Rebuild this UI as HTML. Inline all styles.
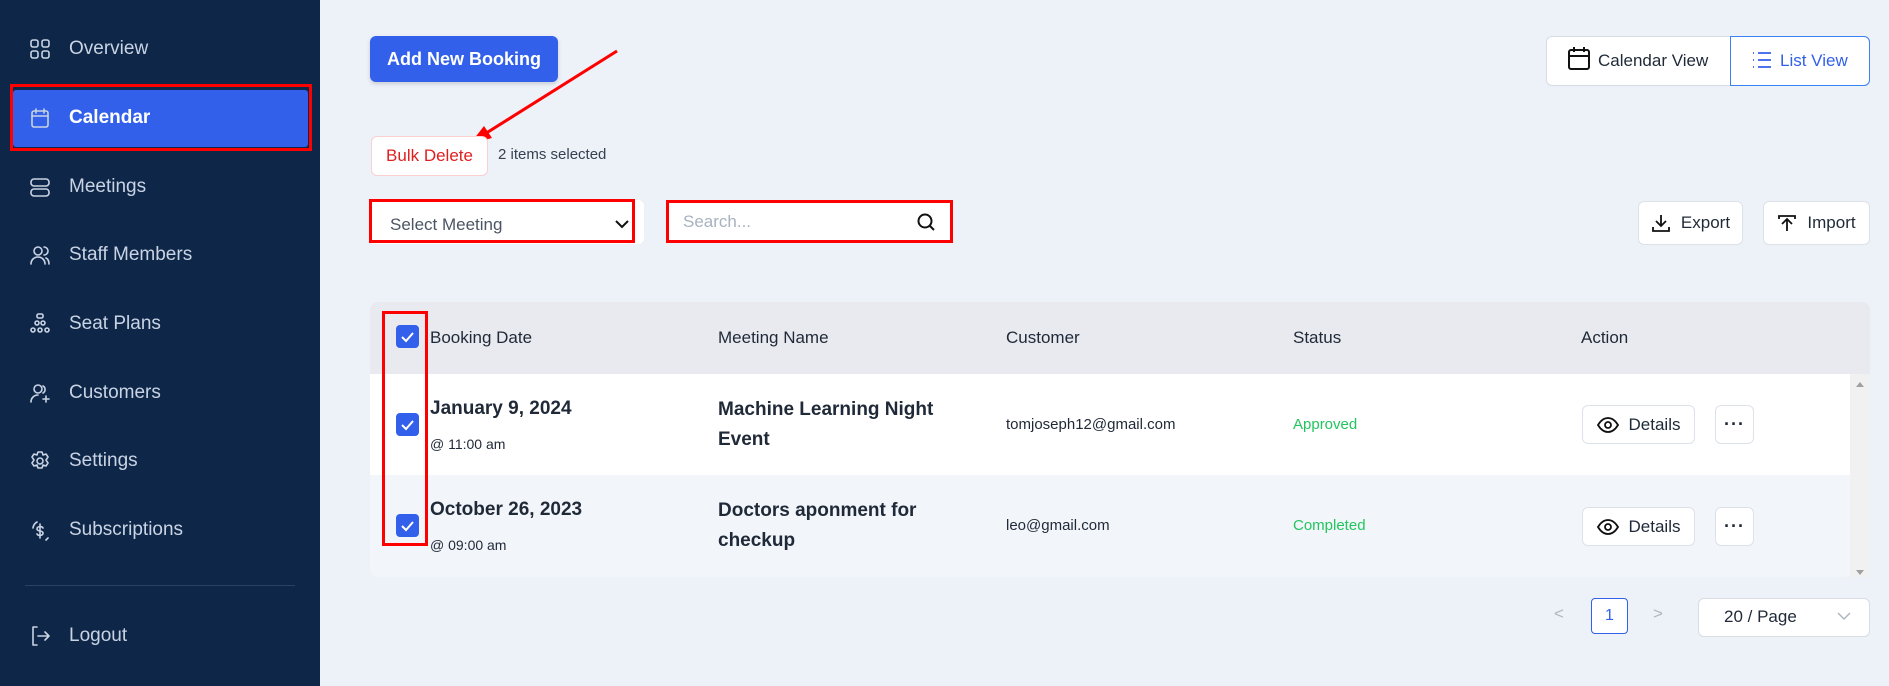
<!DOCTYPE html>
<html><head><meta charset="utf-8"><style>
*{box-sizing:border-box;margin:0;padding:0}
body{width:1889px;height:686px;overflow:hidden;background:#edf1f8;font-family:"Liberation Sans",sans-serif;position:relative}
.abs{position:absolute}
#sb{left:0;top:0;width:320px;height:686px;background:#0e2749}
.nav{position:absolute;left:29px;height:30px;display:flex;align-items:center;color:#c9d3e3;font-size:19px}
.nav svg{width:22px;height:22px;margin-right:18px;stroke:#c9d3e3;fill:none;stroke-width:1.6;stroke-linecap:round;stroke-linejoin:round}
.btn{position:absolute;background:#fff;border:1px solid #dde2ea;border-radius:6px;display:flex;align-items:center;justify-content:center;font-size:18px;color:#1f2937}
.red{position:absolute;border:3px solid #f00}
.th{position:absolute;top:328px;font-size:17px;color:#1f2937}
.date{position:absolute;left:430px;font-size:19px;font-weight:bold;color:#1f2937}
.time{position:absolute;left:430px;font-size:14px;color:#1f2937}
.mn{position:absolute;left:718px;font-size:19px;font-weight:bold;color:#1f2937;line-height:30px}
.em{position:absolute;left:1006px;font-size:15px;color:#1f2937}
.st{position:absolute;left:1293px;font-size:15px;color:#22c55e}
.cb{position:absolute;left:396px;width:23px;height:23px;background:#3360ea;border-radius:4px}
.cb svg{width:23px;height:23px}
</style></head><body>
<div id="sb" class="abs"></div>
<div class="abs" style="left:10px;top:84px;width:302px;height:67px;border:3px solid #f00;background:#0e2749"></div>
<div class="abs" style="left:13px;top:90px;width:295px;height:57px;background:#3360ea;border-radius:3px"></div>
<div class="nav" style="top:34px"><svg viewBox="0 0 22 22"><rect x="2" y="2" width="7" height="7" rx="2"/><rect x="13" y="2" width="7" height="7" rx="2"/><rect x="2" y="13" width="7" height="7" rx="2"/><rect x="13" y="13" width="7" height="7" rx="2"/></svg>Overview</div>
<div class="nav" style="top:103px;color:#fff;font-weight:bold"><svg viewBox="0 0 22 22"><rect x="3" y="4" width="16" height="16" rx="2"/><path d="M3 9h16M7 2v4M15 2v4"/></svg>Calendar</div>
<div class="nav" style="top:172px"><svg viewBox="0 0 22 22"><rect x="2" y="3" width="18" height="7" rx="3"/><rect x="2" y="13" width="18" height="7" rx="3"/></svg>Meetings</div>
<div class="nav" style="top:240px"><svg viewBox="0 0 22 22"><circle cx="9" cy="7" r="4"/><path d="M2 20c0-4 3-7 7-7s7 3 7 7M15 3a4 4 0 0 1 0 8M17 14c2 1 3 3 3 6"/></svg>Staff Members</div>
<div class="nav" style="top:309px"><svg viewBox="0 0 22 22"><rect x="8" y="1" width="6" height="4" rx="1.5"/><circle cx="8" cy="10" r="2"/><circle cx="14" cy="10" r="2"/><circle cx="4" cy="17" r="2"/><circle cx="11" cy="17" r="2"/><circle cx="18" cy="17" r="2"/></svg>Seat Plans</div>
<div class="nav" style="top:378px"><svg viewBox="0 0 22 22"><circle cx="9" cy="7" r="4"/><path d="M2 20c0-4 3-7 7-7M14 4a4 4 0 0 1 0 7M17 14v6M14 17h6"/></svg>Customers</div>
<div class="nav" style="top:446px"><svg viewBox="0 0 22 22"><circle cx="11" cy="11" r="3"/><path d="M9 2h4l1 3 3-1 2 3-2 3 2 3-2 3-3-1-1 3H9l-1-3-3 1-2-3 2-3-2-3 2-3 3 1z"/></svg>Settings</div>
<div class="nav" style="top:515px"><svg viewBox="0 0 22 22"><path d="M4 9a8 8 0 0 1 4-6M14 9c-1-2-6-2-6 1s6 1 6 4-5 3-6 1M11 5v14M19 19l-2 2"/></svg>Subscriptions</div>
<div class="abs" style="left:25px;top:585px;width:270px;height:1px;background:#2a4066"></div>
<div class="nav" style="top:621px"><svg viewBox="0 0 22 22"><path d="M8 2H4v18h4M9 11h11M16 7l4 4-4 4"/></svg>Logout</div>

<div class="abs" style="left:370px;top:36px;width:188px;height:46px;background:#3360ea;border-radius:6px;color:#fff;font-weight:bold;font-size:18px;display:flex;align-items:center;justify-content:center;box-shadow:0 2px 4px rgba(0,0,0,.15)">Add New Booking</div>
<svg class="abs" style="left:0;top:0" width="700" height="200"><line x1="617" y1="51" x2="480" y2="137" stroke="#f00" stroke-width="3"/><polygon points="470,144 484,126 492,138" fill="#f00"/></svg>
<div class="btn" style="left:371px;top:136px;width:117px;height:40px;color:#e02020;border-color:#f8d0d0;font-size:17px">Bulk Delete</div>
<div class="abs" style="left:498px;top:146px;font-size:15px;color:#374151">2 items selected</div>
<div class="abs" style="left:369px;top:200px;width:275px;height:44px;background:#fff;border-radius:6px"></div>
<div class="red" style="left:369px;top:199px;width:266px;height:44px"></div>
<div class="abs" style="left:390px;top:215px;font-size:17px;color:#4b5563">Select Meeting</div>
<svg class="abs" style="left:614px;top:218px" width="16" height="12"><path d="M2 3l6 6 6-6" stroke="#111" stroke-width="2" fill="none"/></svg>
<div class="abs" style="left:666px;top:200px;width:287px;height:43px;background:#fff;border:3px solid #f00"></div>
<div class="abs" style="left:683px;top:212px;font-size:17px;color:#a8b2c0">Search...</div>
<svg class="abs" style="left:915px;top:211px" width="22" height="22"><circle cx="10" cy="10" r="6.5" stroke="#111" stroke-width="2" fill="none"/><path d="M15 15l4 4" stroke="#111" stroke-width="2"/></svg>

<div class="abs" style="left:1546px;top:36px;width:324px;height:50px;background:#fff;border:1px solid #d6dce6;border-radius:6px"></div>
<div class="abs" style="left:1730px;top:36px;width:140px;height:50px;border:1.5px solid #3b82f6;border-radius:0 6px 6px 0"></div>
<svg class="abs" style="left:1567px;top:46px" width="24" height="26"><rect x="2" y="4" width="20" height="19" rx="2" stroke="#111" stroke-width="2" fill="none"/><path d="M2 10h20M7 1v5M17 1v5" stroke="#111" stroke-width="2"/></svg>
<div class="abs" style="left:1598px;top:51px;font-size:17px;color:#1f2937">Calendar View</div>
<svg class="abs" style="left:1752px;top:50px" width="20" height="20"><path d="M1 3h1M1 10h1M1 17h1M6 3h13M6 10h13M6 17h13" stroke="#3360ea" stroke-width="1.8"/></svg>
<div class="abs" style="left:1780px;top:51px;font-size:17px;color:#3360ea">List View</div>

<div class="btn" style="left:1638px;top:201px;width:105px;height:44px;font-size:17px"><svg width="20" height="20" style="margin-right:10px"><path d="M10 2v11M5 8l5 5 5-5M2 14v4h16v-4" stroke="#111" stroke-width="1.8" fill="none"/></svg>Export</div>
<div class="btn" style="left:1763px;top:201px;width:107px;height:44px;font-size:17px"><svg width="20" height="20" style="margin-right:10px"><path d="M2 6V3h16v3M10 18V7M5 11l5-5 5 5" stroke="#111" stroke-width="1.8" fill="none"/></svg>Import</div>

<div class="abs" style="left:370px;top:302px;width:1500px;height:275px;background:#fff;border-radius:8px;overflow:hidden">
<div style="height:72px;background:#e8eaef"></div>
<div style="height:101px;background:#fff"></div>
<div style="height:102px;background:#f2f5fa"></div>
</div>
<div class="abs" style="left:1850px;top:374px;width:20px;height:203px;background:#f1f1f1"></div>
<svg class="abs" style="left:1854px;top:379px" width="12" height="200"><path d="M2 8l4-5 4 5z" fill="#a0a0a0"/><path d="M2 191l4 5 4-5z" fill="#a0a0a0"/></svg>
<div class="th" style="left:430px">Booking Date</div>
<div class="th" style="left:718px">Meeting Name</div>
<div class="th" style="left:1006px">Customer</div>
<div class="th" style="left:1293px">Status</div>
<div class="th" style="left:1581px">Action</div>
<div class="cb" style="top:325px"><svg viewBox="0 0 23 23"><path d="M6 12l4 4 7-8" stroke="#fff" stroke-width="2" fill="none"/></svg></div>
<div class="cb" style="top:413px"><svg viewBox="0 0 23 23"><path d="M6 12l4 4 7-8" stroke="#fff" stroke-width="2" fill="none"/></svg></div>
<div class="cb" style="top:514px"><svg viewBox="0 0 23 23"><path d="M6 12l4 4 7-8" stroke="#fff" stroke-width="2" fill="none"/></svg></div>
<div class="red" style="left:382px;top:311px;width:46px;height:235px"></div>

<div class="date" style="top:398px">January 9, 2024</div>
<div class="time" style="top:436px">@ 11:00 am</div>
<div class="mn" style="top:395px">Machine Learning Night<br>Event</div>
<div class="em" style="top:416px">tomjoseph12@gmail.com</div>
<div class="st" style="top:416px">Approved</div>
<div class="date" style="top:499px">October 26, 2023</div>
<div class="time" style="top:537px">@ 09:00 am</div>
<div class="mn" style="top:496px">Doctors aponment for<br>checkup</div>
<div class="em" style="top:517px">leo@gmail.com</div>
<div class="st" style="top:517px">Completed</div>

<div class="btn" style="left:1582px;top:405px;width:113px;height:39px;font-size:17px"><svg width="22" height="16" style="margin-right:10px"><path d="M1 8c3-5 6-7 10-7s7 2 10 7c-3 5-6 7-10 7s-7-2-10-7z" stroke="#111" stroke-width="1.8" fill="none"/><circle cx="11" cy="8" r="3" stroke="#111" stroke-width="1.8" fill="none"/></svg>Details</div>
<div class="btn" style="left:1715px;top:405px;width:39px;height:39px;font-weight:bold;font-size:18px;letter-spacing:1px">···</div>
<div class="btn" style="left:1582px;top:507px;width:113px;height:39px;font-size:17px"><svg width="22" height="16" style="margin-right:10px"><path d="M1 8c3-5 6-7 10-7s7 2 10 7c-3 5-6 7-10 7s-7-2-10-7z" stroke="#111" stroke-width="1.8" fill="none"/><circle cx="11" cy="8" r="3" stroke="#111" stroke-width="1.8" fill="none"/></svg>Details</div>
<div class="btn" style="left:1715px;top:507px;width:39px;height:39px;font-weight:bold;font-size:18px;letter-spacing:1px">···</div>

<div class="abs" style="left:1554px;top:604px;font-size:17px;color:#b0b6c0">&lt;</div>
<div class="abs" style="left:1591px;top:598px;width:37px;height:36px;border:1px solid #3360ea;border-radius:4px;color:#3360ea;font-size:16px;display:flex;align-items:center;justify-content:center;background:#fff">1</div>
<div class="abs" style="left:1653px;top:604px;font-size:17px;color:#b0b6c0">&gt;</div>
<div class="abs" style="left:1698px;top:598px;width:172px;height:39px;background:#fff;border:1px solid #d9dee6;border-radius:6px"></div>
<div class="abs" style="left:1724px;top:607px;font-size:17px;color:#1f2937">20 / Page</div>
<svg class="abs" style="left:1837px;top:611px" width="14" height="10"><path d="M1 2l6 6 6-6" stroke="#b0b6c0" stroke-width="1.5" fill="none"/></svg>
</body></html>
